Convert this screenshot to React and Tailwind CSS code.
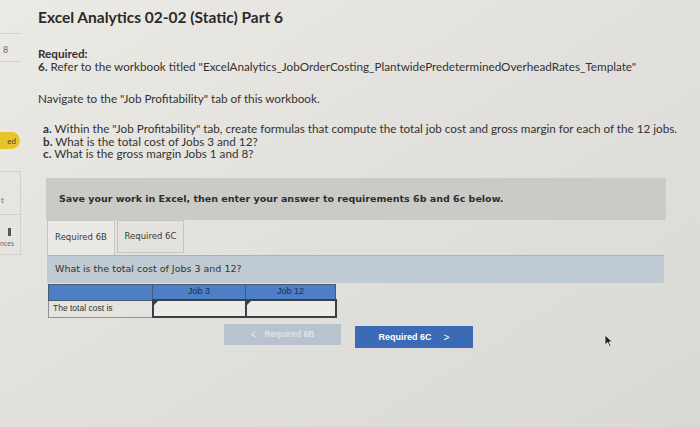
import React from 'react';

const sans = { fontFamily: 'Lato, "Open Sans", sans-serif' };
const verdana = { fontFamily: '"DejaVu Sans", Verdana, sans-serif' };
const arial = { fontFamily: '"Liberation Sans", Arial, sans-serif' };

const Sidebar = () => (
  <div className="w-[21px] shrink-0 flex flex-col text-[8px] text-[#6b6b6b]" style={sans}>
    <div className="h-[34px] border-b border-[#d3d1cc]" />
    <div className="h-[28px] pt-[9px] pl-[3px] text-[9px] border-b border-[#d3d1cc]">8</div>
    <div className="h-[70px]" />
    <div className="h-[17px] w-[20px] rounded-r-full bg-[#e8c42c] text-[#4b4520] text-[8px] flex items-center justify-end pr-[4px]">ed</div>
    <div className="h-[22px]" />
    <div className="h-[44px] border-y border-r border-[#d3d1cc] flex items-end pb-[8px] pl-[1px]">t</div>
    <div className="h-[40px] border-b border-r border-[#d3d1cc] flex flex-col justify-end pb-[6px]">
      <div className="w-[3px] h-[8px] bg-[#555] ml-[8px] mb-[2px]" />
      <span className="text-[7px]">nces</span>
    </div>
  </div>
);

const Cursor = () => (
  <svg className="absolute left-[604px] top-[334px]" width="9" height="13" viewBox="0 0 9 13">
    <path d="M1 1 L1 11 L3.5 8.5 L5.5 12.5 L7 11.8 L5 8 L8.5 8 Z" fill="#222" stroke="#f2f2f2" strokeWidth="0.8" />
  </svg>
);

export default function App() {
  return (
    <div className="relative w-[700px] h-[427px] overflow-hidden flex bg-gradient-to-br from-[#eceae4] via-[#e1e0dc] to-[#d9d9d6] text-[#2d2d2d]">
      <Sidebar />
      <div className="flex-1 pl-[17px] pt-[6px]">
        <h1 className="text-[15.5px] font-bold text-[#2a2a2a]" style={sans}>
          Excel Analytics 02-02 (Static) Part 6
        </h1>

        <div className="mt-[18px] text-[11.7px] leading-[13px] text-[#333]" style={sans}>
          <p className="font-bold">Required:</p>
          <p>
            <span className="font-bold">6.</span> Refer to the workbook titled "ExcelAnalytics_JobOrderCosting_PlantwidePredeterminedOverheadRates_Template"
          </p>
          <p className="mt-[19px]">Navigate to the "Job Profitability" tab of this workbook.</p>
          <div className="mt-[17px] pl-[5px] leading-[12.5px]">
            <p><span className="font-bold">a.</span> Within the "Job Profitability" tab, create formulas that compute the total job cost and gross margin for each of the 12 jobs.</p>
            <p><span className="font-bold">b.</span> What is the total cost of Jobs 3 and 12?</p>
            <p><span className="font-bold">c.</span> What is the gross margin Jobs 1 and 8?</p>
          </div>
        </div>

        <div className="mt-[18px] ml-[8px] w-[620px] h-[42px] bg-[#cacac7] flex items-center pl-[13px]">
          <p className="text-[9.5px] font-bold text-[#2e2e2e]" style={verdana}>
            Save your work in Excel, then enter your answer to requirements 6b and 6c below.
          </p>
        </div>

        <div className="ml-[9px] w-[617px]">
          <div className="flex gap-[2px] h-[35px]">
            <div className="w-[68px] bg-[#eae9e5] border border-b-0 border-[#c4c4c0] flex items-center justify-center text-[8.5px] text-[#3a3a3a]" style={verdana}>
              Required 6B
            </div>
            <div className="w-[67px] h-[33px] bg-[#e3e2de] border border-[#c4c4c0] flex items-center justify-center text-[8.5px] text-[#3a3a3a]" style={verdana}>
              Required 6C
            </div>
          </div>
          <div className="h-[28px] bg-[#bfcad2] border-t border-[#a9b3ba] flex items-center pl-[8px] text-[9.5px] text-[#333]" style={verdana}>
            What is the total cost of Jobs 3 and 12?
          </div>

          <table className="mt-[1px] ml-[1px] border-collapse text-[8.5px]" style={arial}>
            <thead>
              <tr className="h-[16px] bg-[#4d7fc6] text-[#1f2f4a] text-[9px]">
                <th className="w-[104px] border border-[#4a5a70]" />
                <th className="w-[93px] border border-[#4a5a70] font-normal">Job 3</th>
                <th className="w-[90px] border border-[#4a5a70] font-normal">Job 12</th>
              </tr>
            </thead>
            <tbody>
              <tr className="h-[17px]">
                <td className="border border-[#8e9196] bg-[#e4e3df] pl-[4px] text-[#333]">The total cost is</td>
                <td className="relative border-2 border-[#3c3f44] bg-[#ecebe7]">
                  <span className="absolute left-0 top-0 w-0 h-0 border-t-[4px] border-r-[4px] border-t-[#2a3f66] border-r-transparent" />
                </td>
                <td className="relative border-2 border-[#3c3f44] bg-[#ecebe7]">
                  <span className="absolute left-0 top-0 w-0 h-0 border-t-[4px] border-r-[4px] border-t-[#2a3f66] border-r-transparent" />
                </td>
              </tr>
            </tbody>
          </table>

          <div className="mt-[6px] flex gap-[14px] pl-[177px]">
            <div className="w-[117px] h-[21px] bg-[#b9c3cd] flex items-center justify-center gap-[8px] text-[8.5px] font-bold text-[#dfe4ea]" style={arial}>
              <span className="text-[10px] font-normal">&lt;</span>
              <span>Required 6B</span>
            </div>
            <div className="mt-[2px] w-[118px] h-[22px] bg-[#3b6bb6] flex items-center justify-center gap-[12px] text-[9px] font-bold text-white" style={arial}>
              <span>Required 6C</span>
              <span className="text-[10px] font-normal">&gt;</span>
            </div>
          </div>
        </div>
      </div>
      <Cursor />
    </div>
  );
}
